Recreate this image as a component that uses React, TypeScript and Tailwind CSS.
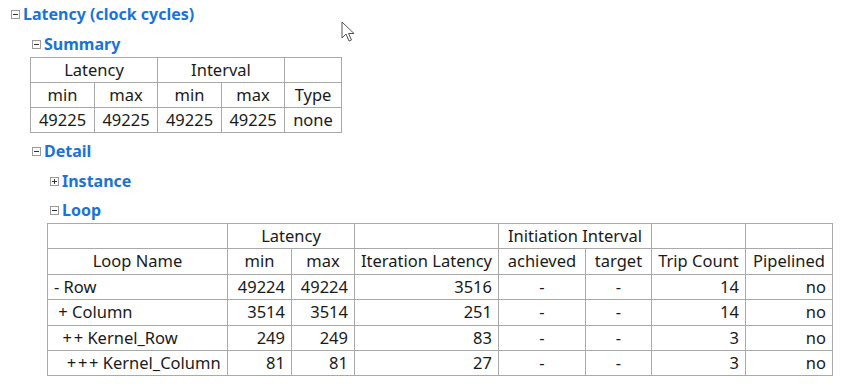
import React from 'react'

const FONT = "font-['Segoe_UI','Noto_Sans','Open_Sans',sans-serif]"

const ToggleBox = ({ open }: { open: boolean }) => (
  <span className="relative inline-block h-[9px] w-[9px] shrink-0 border border-[#9a9a9a] bg-white">
    <span className="absolute left-[1px] top-[3px] h-[1px] w-[5px] bg-[#333]" />
    {open ? null : <span className="absolute left-[3px] top-[1px] h-[5px] w-[1px] bg-[#333]" />}
  </span>
)

const Heading = ({ label, open, className }: { label: string; open: boolean; className: string }) => (
  <div className={`flex items-center gap-[3px] ${className}`}>
    <ToggleBox open={open} />
    <span className="text-[16px] font-bold leading-none text-[#1a73d6]">{label}</span>
  </div>
)

const cell = 'border border-[#a9a9a9] px-[6px] h-[25px] leading-none'
const loopCell = 'border border-[#a9a9a9] px-[6px] h-[25.4px] leading-none'

const summaryCols = [64, 63, 64, 63, 57]
const loopCols = [180, 64, 63, 141, 87, 66, 94, 87]

const loopRows = [
  ['- Row', '49224', '49224', '3516', '14'],
  ['\u00a0+ Column', '3514', '3514', '251', '14'],
  ['\u00a0\u00a0+\u200a+ Kernel_Row', '249', '249', '83', '3'],
  ['\u00a0\u00a0\u00a0+\u200a+\u200a+ Kernel_Column', '81', '81', '27', '3']
]

export default function App() {
  return (
    <div className={`h-[384px] w-[850px] overflow-hidden bg-white text-[16.5px] text-[#1a1a1a] ${FONT}`}>
      <Heading label="Latency (clock cycles)" open className="ml-[11px] mt-[6px]" />
      <Heading label="Summary" open className="ml-[32px] mt-[14px]" />
      <table className="ml-[30px] mt-[5px] table-fixed border-collapse">
        <colgroup>
          {summaryCols.map((w, i) => (
            <col key={i} style={{ width: w }} />
          ))}
        </colgroup>
        <tbody>
          <tr>
            <td colSpan={2} className={`${cell} text-center`}>Latency</td>
            <td colSpan={2} className={`${cell} text-center`}>Interval</td>
            <td className={cell} />
          </tr>
          <tr>
            {['min', 'max', 'min', 'max', 'Type'].map((t, i) => (
              <td key={i} className={`${cell} text-center`}>{t}</td>
            ))}
          </tr>
          <tr>
            {['49225', '49225', '49225', '49225', 'none'].map((t, i) => (
              <td key={i} className={`${cell} text-center`}>{t}</td>
            ))}
          </tr>
        </tbody>
      </table>
      <Heading label="Detail" open className="ml-[32px] mt-[10px]" />
      <Heading label="Instance" open={false} className="ml-[50px] mt-[14px]" />
      <Heading label="Loop" open className="ml-[50px] mt-[13px]" />
      <table className="ml-[47px] mt-[5px] table-fixed border-collapse">
        <colgroup>
          {loopCols.map((w, i) => (
            <col key={i} style={{ width: w }} />
          ))}
        </colgroup>
        <tbody>
          <tr>
            <td className={loopCell} />
            <td colSpan={2} className={`${loopCell} text-center`}>Latency</td>
            <td className={loopCell} />
            <td colSpan={2} className={`${loopCell} text-center`}>Initiation Interval</td>
            <td className={loopCell} />
            <td className={loopCell} />
          </tr>
          <tr>
            {['Loop Name', 'min', 'max', 'Iteration Latency', 'achieved', 'target', 'Trip Count', 'Pipelined'].map((t) => (
              <td key={t} className={`${loopCell} text-center whitespace-nowrap`}>{t}</td>
            ))}
          </tr>
          {loopRows.map((r) => (
            <tr key={r[0]}>
              <td className={`${loopCell} whitespace-pre text-left`}>{r[0]}</td>
              <td className={`${loopCell} text-right`}>{r[1]}</td>
              <td className={`${loopCell} text-right`}>{r[2]}</td>
              <td className={`${loopCell} text-right`}>{r[3]}</td>
              <td className={`${loopCell} text-center`}>-</td>
              <td className={`${loopCell} text-center`}>-</td>
              <td className={`${loopCell} text-right`}>{r[4]}</td>
              <td className={`${loopCell} text-right`}>no</td>
            </tr>
          ))}
        </tbody>
      </table>
      <svg className="absolute left-[341px] top-[21px]" width="14" height="22" viewBox="0 0 14 22">
        <path d="M1 1 L1 17 L5 13 L8 20 L10.5 19 L7.5 12.5 L13 12.5 Z" fill="white" stroke="#555" strokeWidth="1" strokeLinejoin="round" />
      </svg>
    </div>
  )
}
